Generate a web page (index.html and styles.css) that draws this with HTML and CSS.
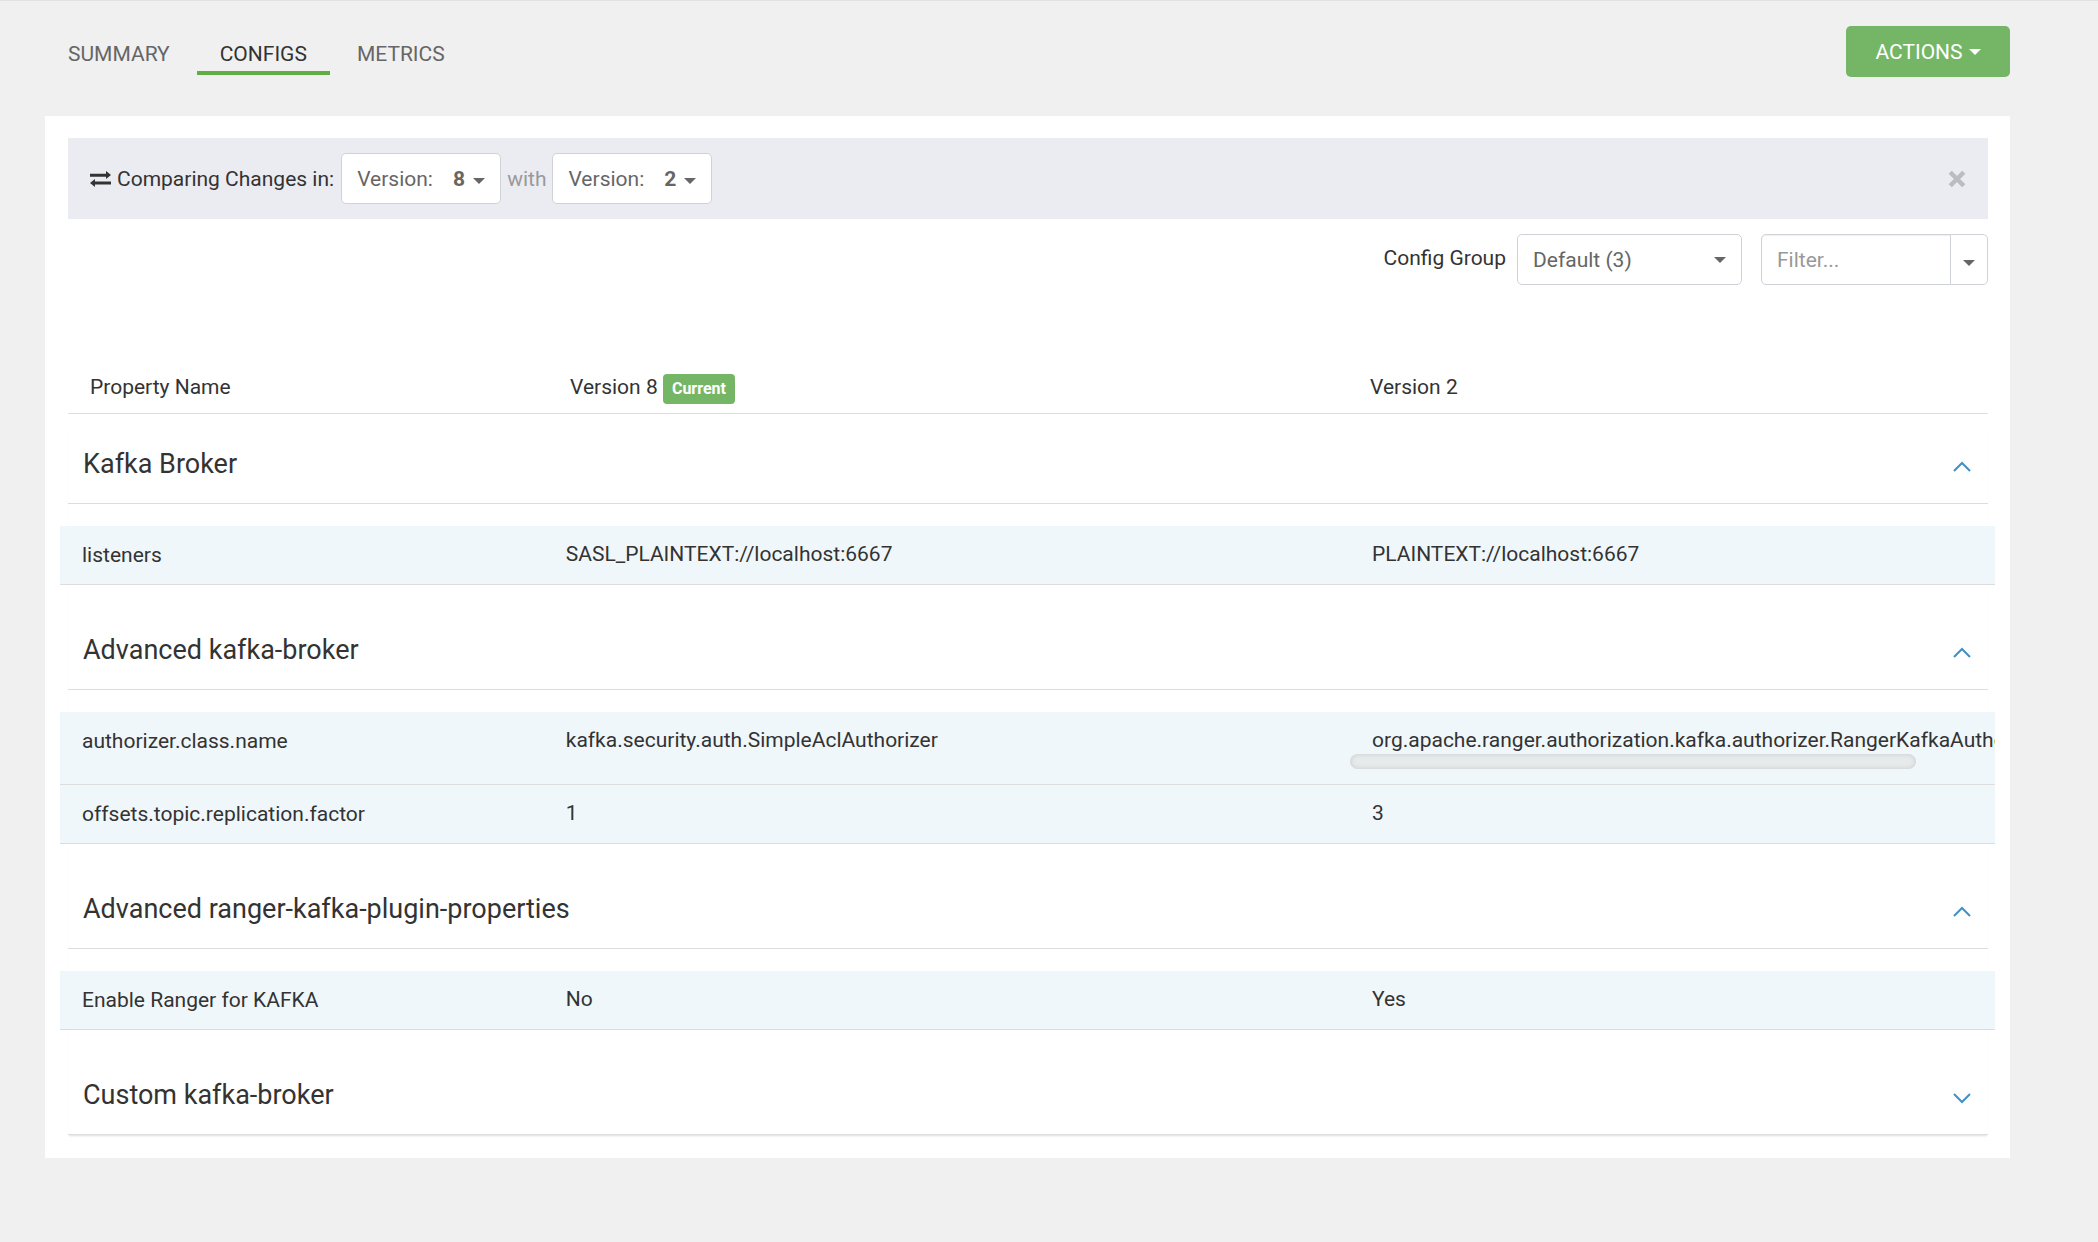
FILE: index.html
```html
<!DOCTYPE html>
<html lang="en">
<head>
<meta charset="utf-8">
<title>Kafka - Configs</title>
<link rel="stylesheet" href="styles.css">
</head>
<body>
<div class="page">
  <header class="topbar">
    <nav class="tabs">
      <a class="tab" href="#summary">SUMMARY</a>
      <a class="tab active" href="#configs">CONFIGS</a>
      <a class="tab" href="#metrics">METRICS</a>
    </nav>
    <button class="actions" type="button">ACTIONS <span class="caret"></span></button>
  </header>

  <main class="panel">
    <div class="compare-bar">
      <svg class="swap" viewBox="0 0 21 16" aria-hidden="true"><path d="M0 2.700h16V0l5 4-5 4V5.700H0zM21 10.500H5V8l-5 4 5 4v-2.500h16z"/></svg>
      <span class="compare-label">Comparing Changes in:</span>
      <button class="control version" type="button">Version: <b>8</b><span class="caret"></span></button>
      <span class="with">with</span>
      <button class="control version" type="button">Version: <b>2</b><span class="caret"></span></button>
      <button class="close" type="button" aria-label="Close comparison"><svg viewBox="0 0 16 16"><path d="M2 2l12 12M14 2L2 14"/></svg></button>
    </div>

    <div class="filters">
      <label class="group-label" for="group">Config Group</label>
      <span class="select-wrap">
        <select class="control group" id="group"><option>Default (3)</option></select>
        <span class="caret"></span>
      </span>
      <div class="filter">
        <input class="control filter-input" type="text" placeholder="Filter..." aria-label="Filter">
        <button class="control filter-toggle" type="button" aria-label="Filter options"><span class="caret"></span></button>
      </div>
    </div>

    <div class="columns">
      <span>Property Name</span>
      <span>Version 8 <span class="badge">Current</span></span>
      <span>Version 2</span>
    </div>

    <div class="groups">
      <section class="group-block">
        <h2 class="heading">Kafka Broker <button class="toggle" type="button" aria-label="Collapse"><svg viewBox="0 0 18 12"><path d="M1 10l8-8 8 8"/></svg></button></h2>
        <table class="props">
          <tr><th scope="row">listeners</th><td>SASL_PLAINTEXT://localhost:6667</td><td>PLAINTEXT://localhost:6667</td></tr>
        </table>
      </section>
      <section class="group-block">
        <h2 class="heading">Advanced kafka-broker <button class="toggle" type="button" aria-label="Collapse"><svg viewBox="0 0 18 12"><path d="M1 10l8-8 8 8"/></svg></button></h2>
        <table class="props">
          <tr><th scope="row">authorizer.class.name</th><td>kafka.security.auth.SimpleAclAuthorizer</td><td>org.apache.ranger.authorization.kafka.authorizer.RangerKafkaAuthorizer<div class="scroll"></div></td></tr>
          <tr><th scope="row">offsets.topic.replication.factor</th><td>1</td><td>3</td></tr>
        </table>
      </section>
      <section class="group-block">
        <h2 class="heading">Advanced ranger-kafka-plugin-properties <button class="toggle" type="button" aria-label="Collapse"><svg viewBox="0 0 18 12"><path d="M1 10l8-8 8 8"/></svg></button></h2>
        <table class="props">
          <tr><th scope="row">Enable Ranger for KAFKA</th><td>No</td><td>Yes</td></tr>
        </table>
      </section>
      <section class="group-block">
        <h2 class="heading">Custom kafka-broker <button class="toggle" type="button" aria-label="Expand"><svg viewBox="0 0 18 12"><path d="M1 2l8 8 8-8"/></svg></button></h2>
      </section>
    </div>
  </main>
</div>
</body>
</html>
```

FILE: styles.css
```css
* { box-sizing: border-box; }

body {
  margin: 0;
  background: #f0f0f0;
  color: #333;
  font: 21px/30px Roboto, "Liberation Sans", sans-serif;
}

button, input, select { font: inherit; margin: 0; }
button { cursor: pointer; }

.page {
  min-height: 100vh;
  padding: 25px 88px 84px 45px;
  border-top: 1px solid #e1e1e1;
}

.topbar {
  display: flex;
  justify-content: space-between;
  align-items: flex-start;
  height: 90px;
}

.tabs { display: flex; gap: 27px; padding: 13px 0 0 23px; }

.tab {
  padding-bottom: 2px;
  border-bottom: 4px solid transparent;
  color: #666;
  text-decoration: none;
}
.tab.active { padding: 0 23px 2px; color: #333; border-color: #5fae44; }

.caret {
  display: inline-block;
  border: 6px solid transparent;
  border-top-color: currentColor;
  border-bottom: 0;
}

.actions {
  display: flex;
  align-items: center;
  justify-content: center;
  gap: 6px;
  width: 164px;
  height: 51px;
  border: 0;
  border-radius: 5px;
  background: #75b666;
  color: #fff;
}

.panel { padding: 22px 22px 23px 23px; background: #fff; }

.compare-bar {
  display: flex;
  align-items: center;
  gap: 6px;
  height: 81px;
  padding: 0 22px;
  background: #ebecf1;
}
.swap { width: 21px; height: 16px; fill: #333; }
.compare-label { padding-right: 1px; }
.with { color: #999; }

.control {
  height: 51px;
  border: 1px solid #cfd3d7;
  border-radius: 5px;
  background: #fff;
  color: #666;
}

.version { display: flex; align-items: center; width: 160px; padding: 1px 15px 0; }
.version b { margin-left: 20px; }
.version .caret { margin: 3px 0 0 8px; }

.close {
  display: flex;
  margin-left: auto;
  padding: 0;
  border: 0;
  background: none;
}
.close svg { width: 18px; height: 18px; stroke: #bbbcc0; stroke-width: 4; }

.filters {
  display: flex;
  justify-content: flex-end;
  align-items: center;
  margin-top: 15px;
}
.group-label { margin-right: 11px; padding-bottom: 4px; }
.select-wrap { display: flex; align-items: center; margin-right: 19px; }
.select-wrap .caret { margin-left: -28px; margin-right: 16px; color: #666; pointer-events: none; }
.group { width: 225px; padding: 1px 15px 0; appearance: none; }
.filter { display: flex; }
.filter-input {
  width: 190px;
  padding: 1px 15px 0;
  border-radius: 5px 0 0 5px;
  box-shadow: inset 0 1px 1px #0001;
}
.filter-input::placeholder { color: #999; }
.filter-toggle {
  width: 38px;
  margin-left: -1px;
  padding: 0;
  border-radius: 0 5px 5px 0;
  line-height: 12px;
}

.columns {
  display: grid;
  grid-template-columns: 480fr 800fr 640fr;
  grid-auto-rows: 30px;
  margin-top: 87px;
  padding-bottom: 11px;
  border-bottom: 1px solid #ddd;
}
.columns > span { padding-left: 22px; }

.badge {
  display: inline-block;
  padding: 0 9px;
  border-radius: 4px;
  background: #75b666;
  color: #fff;
  font-size: 16px;
  font-weight: 700;
}

.groups { margin-top: 16px; box-shadow: 0 2px 2px -1px #0002; }

.heading {
  display: flex;
  justify-content: space-between;
  align-items: center;
  height: 74px;
  margin: 0;
  padding: 0 17px 6px 15px;
  border-bottom: 1px solid #ddd;
  font-size: 27px;
  font-weight: 400;
}
.group-block + .group-block { padding-top: 31px; }

.toggle { display: flex; padding: 7px 0 0; border: 0; background: none; }
.toggle svg { width: 18px; height: 12px; fill: none; stroke: #428fc6; stroke-width: 2; }

.props {
  width: calc(100% + 15px);
  margin: 22px -7px 0 -8px;
  border-spacing: 0;
  table-layout: fixed;
  background: #f0f7fb;
}
.props th, .props td {
  padding: 14px 0 14px 22px;
  border-bottom: 1px solid #ddd;
  overflow: hidden;
  font-weight: 400;
  text-align: left;
  vertical-align: top;
  white-space: nowrap;
}
.props td { padding: 13px 0 15px 22px; }
.props th { width: 25%; }
.props td:last-child { width: calc(100% / 3); }

.scroll {
  width: 566px;
  height: 15px;
  margin: -1px 0 0 -22px;
  border-radius: 8px;
  background: #e7eaeb;
  box-shadow: inset 0 0 5px #0002;
}
```
